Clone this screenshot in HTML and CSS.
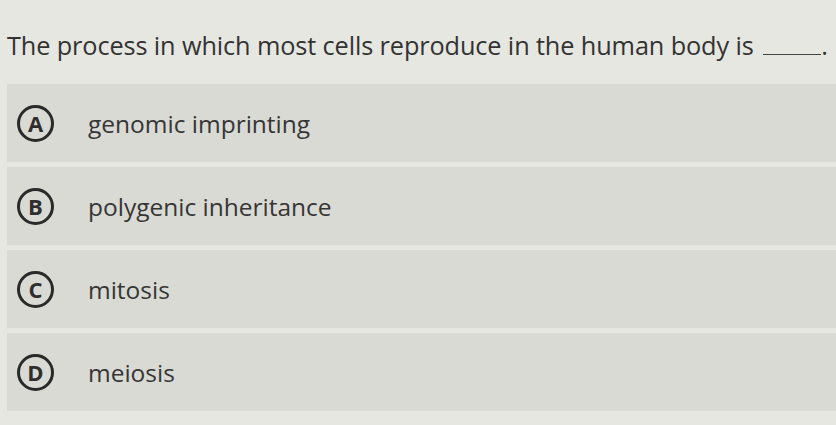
FILE: index.html
```html
<!DOCTYPE html>
<html>
<head>
<meta charset="utf-8">
<link rel="stylesheet" href="styles.css">
</head>
<body>
<div class="page">
  <p class="question">The process in which most cells reproduce in the human body is <span class="blank"></span>.</p>
  <div class="options">
    <div class="option"><span class="letter">A</span><span class="text">genomic imprinting</span></div>
    <div class="option"><span class="letter">B</span><span class="text">polygenic inheritance</span></div>
    <div class="option"><span class="letter">C</span><span class="text">mitosis</span></div>
    <div class="option"><span class="letter">D</span><span class="text">meiosis</span></div>
  </div>
</div>
</body>
</html>
```
FILE: styles.css
```css
html, body {
  margin: 0;
  padding: 0;
  background: #e7e7e2;
}
body {
  font-family: "Open Sans", "Liberation Sans", sans-serif;
  color: #333;
  width: 836px;
  height: 425px;
  overflow: hidden;
}
.page {
  padding: 27px 0 0 7px;
}
.question {
  margin: 0;
  font-size: 25.3px;
  line-height: 36px;
  letter-spacing: -0.12px;
  white-space: nowrap;
}
.blank {
  display: inline-block;
  width: 58px;
  border-bottom: 1.5px solid #444;
  margin-left: 3px;
}
.options {
  margin-top: 21px;
  display: flex;
  flex-direction: column;
  gap: 5px;
}
.option {
  height: 78px;
  background: #dadad5;
  display: flex;
  align-items: center;
  padding-left: 10px;
}
.letter {
  box-sizing: border-box;
  flex: 0 0 auto;
  width: 37px;
  height: 37px;
  border: 3px solid #2a2a2a;
  border-radius: 50%;
  display: flex;
  align-items: center;
  justify-content: center;
  font-weight: 700;
  font-size: 22px;
  line-height: 1;
  color: #2e2e2e;
}
.text {
  margin-left: 34px;
  font-size: 24.5px;
  color: #363636;
}
```
